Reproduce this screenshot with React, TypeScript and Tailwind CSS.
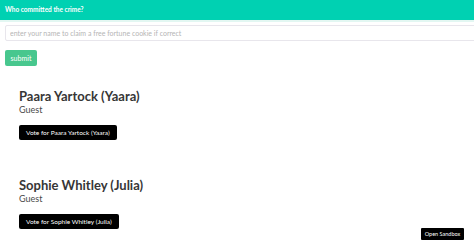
import React from "react";

const font = { fontFamily: 'Lato, "Noto Sans", sans-serif' };

function Suspect({ name, top }: { name: string; top: string }) {
  return (
    <div className={`flex flex-col items-start px-[19px] ${top}`}>
      <div className="text-[13px] leading-[16px] font-bold text-[#363636]">{name}</div>
      <div className="text-[9px] leading-[12px] text-[#4a4a4a]">Guest</div>
      <button className="mt-[9px] h-[15px] bg-black text-white text-[6.5px] leading-[15px] px-[7px] rounded-[2px]">
        Vote for {name}
      </button>
    </div>
  );
}

export default function App() {
  return (
    <div className="relative w-[474px] h-[248px] overflow-hidden bg-white flex flex-col" style={font}>
      <div className="h-[20px] shrink-0 bg-[#00d1b2] flex items-center px-[5px] text-white text-[6.5px] font-bold">
        Who committed the crime?
      </div>
      <div className="h-[2px] shrink-0 bg-[#e3f7f2]" />
      <div className="pl-[5px] pt-[3px] flex">
        <input
          className="block w-[480px] shrink-0 h-[16px] border border-[#e8e6ec] rounded-[2px] px-[4px] text-[7px] outline-none placeholder:text-[#b5b5b5]"
          placeholder="enter your name to claim a free fortune cookie if correct"
        />
      </div>
      <div className="pl-[5px] pt-[9px] flex">
        <button className="bg-[#48c78e] text-white text-[7px] h-[16px] w-[32px] rounded-[2px]">submit</button>
      </div>
      <Suspect name="Paara Yartock (Yaara)" top="pt-[22px]" />
      <Suspect name="Sophie Whitley (Julia)" top="pt-[37px]" />
      <button className="absolute left-[421px] top-[228px] w-[43px] h-[12px] bg-black text-white text-[5.5px] leading-[12px] rounded-[1px]">
        Open Sandbox
      </button>
    </div>
  );
}
